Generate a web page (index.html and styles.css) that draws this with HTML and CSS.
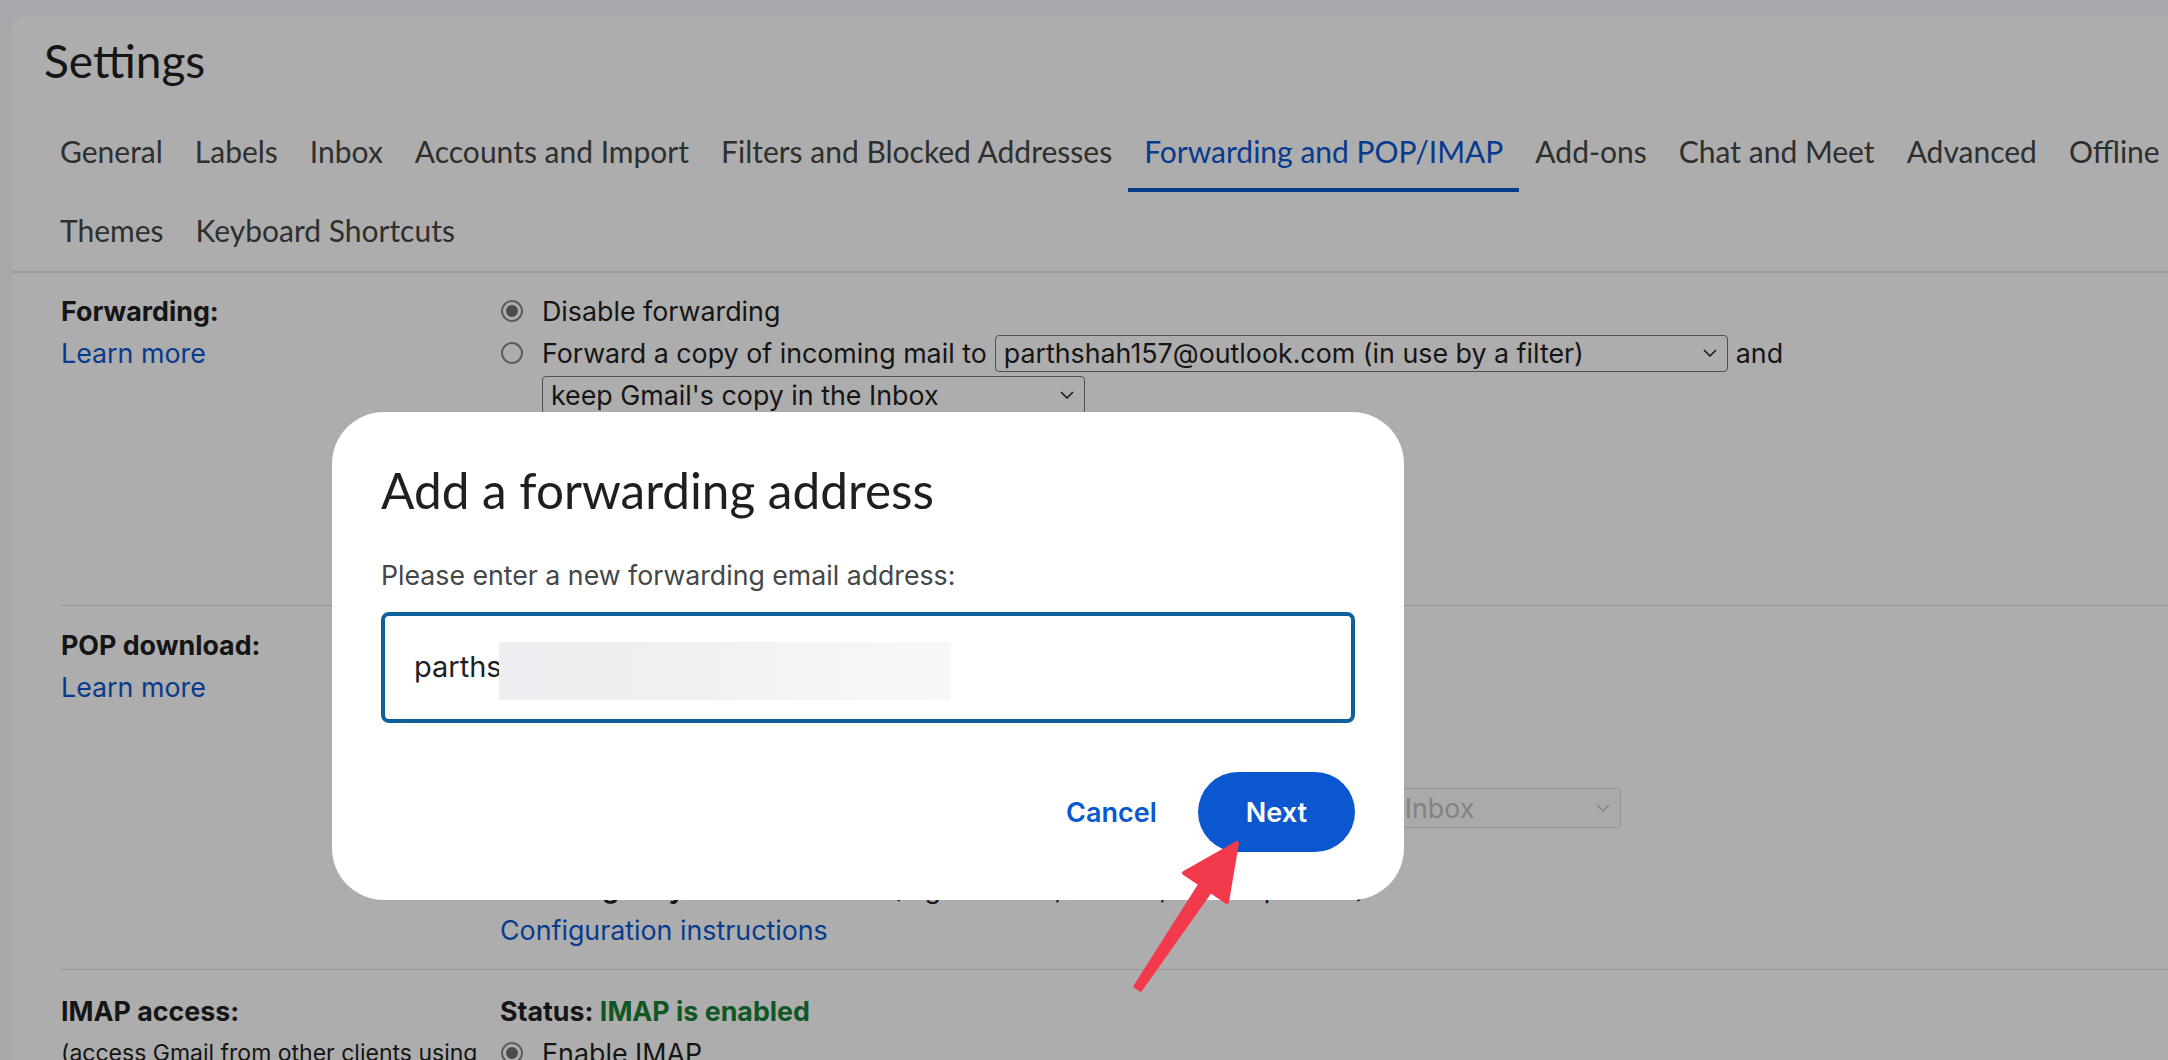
FILE: index.html
```html
<!DOCTYPE html>
<html lang="en">
<head>
<meta charset="utf-8">
<title>Settings</title>
<link rel="stylesheet" href="styles.css">
</head>
<body>
<div class="page">
  <div class="card">
    <h1 class="title">Settings</h1>
    <nav class="tabs">
      <div class="tab-row">
        <span class="tab">General</span>
        <span class="tab">Labels</span>
        <span class="tab">Inbox</span>
        <span class="tab">Accounts and Import</span>
        <span class="tab">Filters and Blocked Addresses</span>
        <span class="tab tab--active">Forwarding and POP/IMAP</span>
        <span class="tab">Add-ons</span>
        <span class="tab">Chat and Meet</span>
        <span class="tab">Advanced</span>
        <span class="tab">Offline</span>
      </div>
      <div class="tab-row">
        <span class="tab">Themes</span>
        <span class="tab">Keyboard Shortcuts</span>
      </div>
    </nav>

    <section class="section section--fwd">
      <div class="label">
        <div class="label-title">Forwarding:</div>
        <a class="link">Learn more</a>
      </div>
      <div class="content">
        <div class="line"><span class="radio radio--on"></span><span>Disable forwarding</span></div>
        <div class="line"><span class="radio"></span><span>Forward a copy of incoming mail to</span><span class="select select--wide"><span>parthshah157@outlook.com (in use by a filter)</span><svg class="chev" width="14" height="8" viewBox="0 0 14 8"><polyline points="1,1 7,7 13,1"/></svg></span><span>and</span></div>
        <div class="line"><span class="select select--keep select--indent"><span>keep Gmail's copy in the Inbox</span><svg class="chev" width="14" height="8" viewBox="0 0 14 8"><polyline points="1,1 7,7 13,1"/></svg></span></div>
        <div class="line line--gap"><span class="btn-outline">Add a forwarding address</span></div>
        <div class="line line--tip">Tip: You can also forward only some of your mail by <a class="link">creating a filter!</a></div>
      </div>
    </section>

    <section class="section section--pop">
      <div class="label">
        <div class="label-title">POP download:</div>
        <a class="link">Learn more</a>
      </div>
      <div class="content">
        <div class="line"><b>1. Status:</b>&nbsp;POP is disabled</div>
        <div class="line"><span class="radio"></span><span>Enable POP for all mail</span></div>
        <div class="line"><span class="radio"></span><span>Enable POP for mail that arrives from now on</span></div>
        <div class="line line--select"><b>2. When messages are accessed with POP</b><span class="select select--keep select--disabled"><span>keep Gmail's copy in the Inbox</span><svg class="chev" width="14" height="8" viewBox="0 0 14 8"><polyline points="1,1 7,7 13,1"/></svg></span></div>
        <div class="line line--step"><b>3. Configure your email client</b>&nbsp;(e.g. Outlook, Eudora, Netscape Mail)</div>
        <div class="line"><a class="link">Configuration instructions</a></div>
      </div>
    </section>

    <section class="section section--imap">
      <div class="label">
        <div class="label-title">IMAP access:</div>
        <div class="label-sub">(access Gmail from other clients using IMAP)</div>
      </div>
      <div class="content">
        <div class="line"><b>Status:&nbsp;</b><b class="ok">IMAP is enabled</b></div>
        <div class="line"><span class="radio radio--on"></span><span>Enable IMAP</span></div>
      </div>
    </section>
  </div>
</div>

<div class="scrim"></div>

<div class="modal" role="dialog">
  <h2 class="modal-title">Add a forwarding address</h2>
  <p class="modal-label">Please enter a new forwarding email address:</p>
  <div class="field">
    <span class="field-text">parthshah157@outlook.com</span>
    <span class="redact"></span>
  </div>
  <div class="actions">
    <span class="btn">Cancel</span>
    <span class="btn btn--primary">Next</span>
  </div>
</div>

<svg class="arrow" width="140" height="180" viewBox="0 0 140 180">
  <polygon points="117,13 64,43 80.5,54.1 15.5,156.3 20.5,159.7 90.5,60.9 107,72" />
</svg>
</body>
</html>
```

FILE: styles.css
```css
* { box-sizing: border-box; }

html, body {
  margin: 0;
  height: 1060px;
  overflow: hidden;
}

body {
  background: #f6f8fc;
  font-family: Inter, "Open Sans", sans-serif;
  font-size: 26.8px;
  color: #1f1f1f;
}

.page {
  height: 100%;
  padding: 15px 0 0 12px;
}

.card {
  height: 100%;
  overflow: hidden;
  background: #ffffff;
  border-top-left-radius: 16px;
}

.title {
  margin: 0;
  padding: 18px 0 0 32px;
  font: 400 46px/56px Lato, sans-serif;
  color: #1f1f1f;
}

.tabs {
  margin-top: 24px;
  padding-left: 32px;
  border-bottom: 2px solid #e6e6e6;
}

.tab-row {
  display: flex;
  height: 79px;
}

.tab {
  display: flex;
  align-items: center;
  padding: 0 16px;
  border-bottom: 4px solid transparent;
  font: 400 30px Lato, sans-serif;
  color: #444746;
  white-space: nowrap;
}

.tab--active {
  color: #0b57d0;
  border-bottom-color: #0b57d0;
  border-radius: 3px 3px 0 0;
}

.section {
  margin-left: 49px;
  display: grid;
  grid-template-columns: 439px 1fr;
  border-bottom: 1px solid #dcdcdc;
  line-height: 42px;
}

.section--fwd { height: 333px; padding-top: 17px; }
.section--pop { height: 364px; padding-top: 18px; }
.section--imap { padding-top: 20px; border-bottom: none; }

.label-title { font-weight: 700; }

.label-sub {
  font-size: 23px;
  line-height: 42px;
  padding-right: 12px;
}

.link {
  color: #0b57d0;
  text-decoration: none;
}

.line {
  display: flex;
  align-items: center;
  height: 42px;
  white-space: nowrap;
}

.line--gap { margin-top: 30px; height: 56px; }
.line--tip { font-size: 23px; }
.line--select { margin-top: 37px; }
.line--step { margin-top: 38px; }

.radio {
  flex: none;
  width: 22px;
  height: 22px;
  margin: 0 19px 0 1px;
  border: 2px solid #8a8a8a;
  border-radius: 50%;
  display: flex;
  align-items: center;
  justify-content: center;
}

.radio--on::after {
  content: "";
  width: 12px;
  height: 12px;
  border-radius: 50%;
  background: #6f6f6f;
}

.select {
  flex: none;
  display: inline-flex;
  align-items: center;
  justify-content: space-between;
  height: 37px;
  margin: 0 8px;
  padding: 0 10px 0 8px;
  border: 1.5px solid #767676;
  border-radius: 4px;
  background: #ffffff;
  font-size: 26.8px;
  line-height: 1;
  color: #1f1f1f;
}

.select--wide { width: 733px; }
.select--keep { width: 543px; height: 38px; }
.select--indent { margin-left: 42px; }

.select--disabled {
  height: 40px;
  margin-left: 24px;
  color: #c2c2c2;
  border-color: #dadada;
  background: #fbfbfb;
}

.chev {
  flex: none;
  fill: none;
  stroke: #1f1f1f;
  stroke-width: 1.5;
}

.select--disabled .chev { stroke: #c2c2c2; }

.btn-outline {
  display: inline-flex;
  align-items: center;
  height: 48px;
  padding: 0 20px;
  border: 1.5px solid #767676;
  border-radius: 6px;
  font-size: 24px;
}

.ok { color: #188038; }

.scrim {
  position: fixed;
  inset: 0;
  background: rgba(0, 0, 0, 0.32);
}

.modal {
  position: fixed;
  left: 332px;
  top: 412px;
  width: 1072px;
  padding: 48px 49px;
  background: #ffffff;
  border-radius: 52px;
}

.modal-title {
  margin: 0;
  font: 400 49.5px/60px Lato, sans-serif;
  color: #1f1f1f;
}

.modal-label {
  margin: 37px 0 0;
  font-size: 26.7px;
  line-height: 36px;
  color: #444746;
}

.field {
  position: relative;
  margin-top: 19px;
  height: 111px;
  padding-left: 29px;
  border: 4px solid #0f5f99;
  border-radius: 8px;
  display: flex;
  align-items: center;
  overflow: hidden;
  font-size: 29px;
  line-height: 1.2;
  color: #1f1f1f;
}

.field-text { white-space: nowrap; }

.redact {
  position: absolute;
  left: 114px;
  top: 26px;
  width: 452px;
  height: 58px;
  background: linear-gradient(90deg, #eceef1 0%, #eef0f2 40%, #f4f5f6 70%, #f7f8f9 100%);
}

.actions {
  margin-top: 49px;
  display: flex;
  justify-content: flex-end;
  gap: 17px;
}

.btn {
  height: 80px;
  padding: 0 24px;
  border-radius: 40px;
  display: flex;
  align-items: center;
  font-size: 27px;
  font-weight: 600;
  color: #0b57d0;
}

.btn--primary {
  padding: 0 48px;
  background: #0b57d0;
  color: #ffffff;
}

.arrow {
  position: fixed;
  left: 1120px;
  top: 830px;
}

.arrow polygon {
  fill: #f23a4c;
  stroke: #f23a4c;
  stroke-width: 4;
  stroke-linejoin: round;
}
```
